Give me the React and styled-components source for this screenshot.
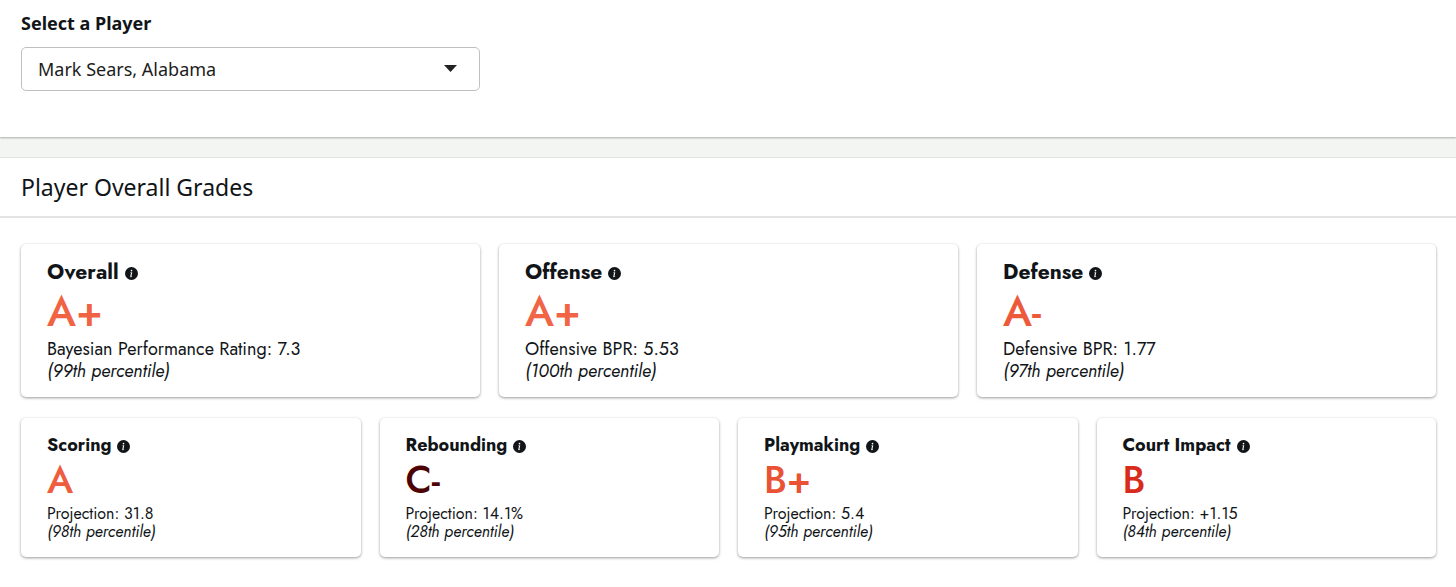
import React, { useState } from 'react'
import styled, { createGlobalStyle } from 'styled-components'
import { BsInfoCircleFill } from 'react-icons/bs'

const GlobalStyle = createGlobalStyle`
  * {
    box-sizing: border-box;
  }
  body {
    margin: 0;
    background: #fff;
    color: #111518;
    font-family: 'Noto Sans', sans-serif;
  }
`

const Page = styled.div`
  background: #f3f5f3;
`

const PickerPanel = styled.section`
  display: grid;
  grid-template-columns: repeat(3, 1fr);
  gap: 19px;
  padding: 10px 20px 46px 21px;
  background: #fff;
  box-shadow: 0 1px 2px rgba(0, 0, 0, 0.3);
`

const Label = styled.label`
  display: block;
  margin-bottom: 11px;
  font-size: 18px;
  font-weight: 700;
  line-height: 26px;
`

const SelectWrap = styled.div`
  position: relative;
`

const Select = styled.select`
  display: block;
  width: 100%;
  height: 44px;
  padding: 0 44px 0 16px;
  border: 1px solid #c0c0c0;
  border-radius: 5px;
  appearance: none;
  background: #fff;
  color: #1c1c1c;
  font-family: inherit;
  font-size: 18px;
`

const Caret = styled.svg`
  position: absolute;
  top: 18px;
  right: 23px;
  width: 13px;
  height: 7px;
  pointer-events: none;
`

const GradesPanel = styled.section`
  margin-top: 20px;
  border-top: 1px solid #e2e4e2;
  background: #fff;
`

const GradesHeader = styled.h2`
  margin: 0;
  padding: 12px 21px;
  border-bottom: 2px solid #e2e3e3;
  font-size: 23px;
  font-weight: 400;
  line-height: 34px;
`

const GradesBody = styled.div`
  display: grid;
  gap: 21px;
  padding: 26px 20px 30px 21px;
  font-family: Jost, Lato, sans-serif;
`

const CardRow = styled.div`
  display: grid;
  grid-template-columns: repeat(${p => p.$columns}, 1fr);
  gap: 19px;
`

const Card = styled.article`
  padding: ${p => (p.$small ? '16px 26px' : '15px 26px')};
  border-radius: 5px;
  background: #fff;
  box-shadow: 0 1px 3px rgba(0, 0, 0, 0.4);
`

const CardTitle = styled.h3`
  display: flex;
  align-items: center;
  gap: 6px;
  margin: 0;
  font-size: ${p => (p.$small ? '18px' : '21px')};
  font-weight: 700;
  line-height: ${p => (p.$small ? '22px' : '26px')};

  svg {
    width: 13px;
    height: 13px;
    margin-top: 3px;
  }
`

const Grade = styled.div`
  margin-bottom: ${p => (p.$small ? '1px' : '0')};
  color: ${p => p.$color};
  font-size: ${p => (p.$small ? '38px' : '42px')};
  font-weight: 500;
  line-height: ${p => (p.$small ? '48px' : '53px')};
`

const Detail = styled.p`
  margin: 0;
  font-size: ${p => (p.$small ? '16px' : '18px')};
  font-style: ${p => (p.$italic ? 'italic' : 'normal')};
  line-height: ${p => (p.$small ? '18px' : '22px')};
`

const mainGrades = [
  { title: 'Overall', grade: 'A+', color: '#f06343', detail: 'Bayesian Performance Rating: 7.3', percentile: '99th' },
  { title: 'Offense', grade: 'A+', color: '#f16445', detail: 'Offensive BPR: 5.53', percentile: '100th' },
  { title: 'Defense', grade: 'A-', color: '#ed5a3b', detail: 'Defensive BPR: 1.77', percentile: '97th' },
]

const skillGrades = [
  { title: 'Scoring', grade: 'A', color: '#ee5d3e', detail: 'Projection: 31.8', percentile: '98th' },
  { title: 'Rebounding', grade: 'C-', color: '#4d0204', detail: 'Projection: 14.1%', percentile: '28th' },
  { title: 'Playmaking', grade: 'B+', color: '#e95235', detail: 'Projection: 5.4', percentile: '95th' },
  { title: 'Court Impact', grade: 'B', color: '#d92b1c', detail: 'Projection: +1.15', percentile: '84th' },
]

const GradeCard = ({ title, grade, color, detail, percentile, small = false }) => (
  <Card $small={small}>
    <CardTitle $small={small}>
      {title}
      <BsInfoCircleFill aria-hidden="true" />
    </CardTitle>
    <Grade $small={small} $color={color}>
      {grade}
    </Grade>
    <Detail $small={small}>{detail}</Detail>
    <Detail $small={small} $italic>
      {`(${percentile} percentile)`}
    </Detail>
  </Card>
)

const App = () => {
  const [player, setPlayer] = useState('Mark Sears, Alabama')

  return (
    <Page>
      <GlobalStyle />
      <PickerPanel>
        <div>
          <Label htmlFor="player">Select a Player</Label>
          <SelectWrap>
            <Select id="player" value={player} onChange={e => setPlayer(e.target.value)}>
              <option>Mark Sears, Alabama</option>
            </Select>
            <Caret viewBox="0 0 13 7" aria-hidden="true">
              <path d="M0 0h13L6.5 7z" fill="#222" />
            </Caret>
          </SelectWrap>
        </div>
      </PickerPanel>
      <GradesPanel>
        <GradesHeader>Player Overall Grades</GradesHeader>
        <GradesBody>
          <CardRow $columns={3}>
            {mainGrades.map(item => (
              <GradeCard key={item.title} {...item} />
            ))}
          </CardRow>
          <CardRow $columns={4}>
            {skillGrades.map(item => (
              <GradeCard key={item.title} {...item} small />
            ))}
          </CardRow>
        </GradesBody>
      </GradesPanel>
    </Page>
  )
}

export default App
